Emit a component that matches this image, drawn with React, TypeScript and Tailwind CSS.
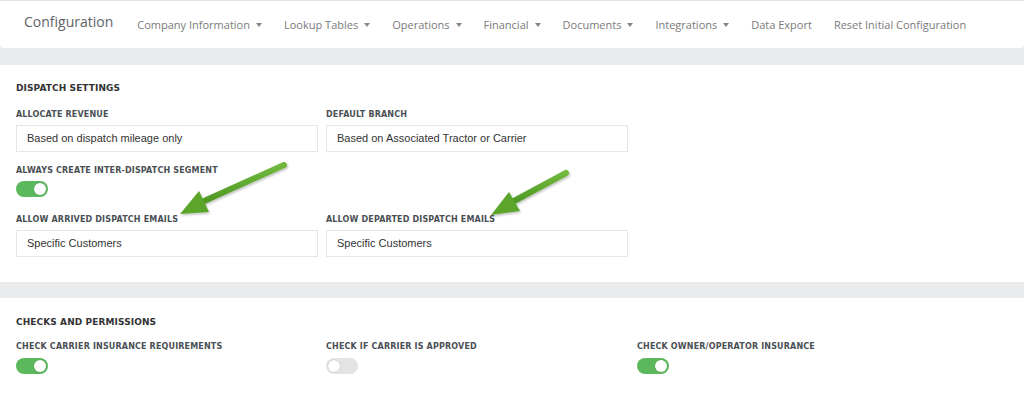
import React from 'react';

const NAV = [
  { label: 'Company Information', caret: true },
  { label: 'Lookup Tables', caret: true },
  { label: 'Operations', caret: true },
  { label: 'Financial', caret: true },
  { label: 'Documents', caret: true },
  { label: 'Integrations', caret: true },
  { label: 'Data Export', caret: false },
  { label: 'Reset Initial Configuration', caret: false },
];

const Label = ({ children }: { children: React.ReactNode }) => (
  <div className="text-[8px] font-bold tracking-[0.02em] text-[#4a4f55] leading-[10px] uppercase font-['DejaVu_Sans',sans-serif]">
    {children}
  </div>
);

const SectionTitle = ({ children }: { children: React.ReactNode }) => (
  <div className="text-[9px] font-bold tracking-[0.01em] text-[#333] leading-[12px] font-['DejaVu_Sans',sans-serif]">
    {children}
  </div>
);

const Field = ({ value }: { value: string }) => (
  <div className="mt-[5px] h-[27px] border border-[#e6e6e6] flex items-center px-[10px] text-[11px] text-[#333] font-['Liberation_Sans',Arial,sans-serif]">
    {value}
  </div>
);

const Toggle = ({ on, className = 'mt-[5px]' }: { on: boolean; className?: string }) => (
  <div
    className={
      className +
      ' w-[32px] h-[16px] rounded-full p-[2px] flex ' +
      (on ? 'bg-[#5cb85c] justify-end' : 'bg-[#e3e3e3] justify-start')
    }
  >
    <div className="w-[12px] h-[12px] rounded-full bg-white shadow-[0_0_1px_rgba(0,0,0,0.3)]" />
  </div>
);

export default function App() {
  return (
    <div className="w-[1024px] h-[396px] bg-[#e9eaeb] overflow-hidden relative">
      {/* top nav */}
      <div className="h-[48px] bg-white border-t border-[#e4e4e4] rounded-b-[4px] flex items-start font-['Open_Sans',sans-serif]">
        <div className="ml-[24px] mt-[11px] text-[14px] text-[#5f6368] leading-[20px]">Configuration</div>
        <div className="ml-[24px] mt-[16px] flex gap-[22px] text-[11px] text-[#7a7a7a] leading-[16px]">
          {NAV.map((n) => (
            <div key={n.label} className="flex items-center">
              {n.label}
              {n.caret && (
                <span className="ml-[6px] w-0 h-0 border-l-[3px] border-r-[3px] border-t-[4px] border-l-transparent border-r-transparent border-t-[#888]" />
              )}
            </div>
          ))}
        </div>
      </div>

      {/* dispatch settings */}
      <div className="mt-[17px] bg-white h-[217px] pl-[16px] pt-[17px]">
        <SectionTitle>DISPATCH SETTINGS</SectionTitle>
        <div className="mt-[16px] grid grid-cols-[302px_302px] gap-x-[8px]">
          <div>
            <Label>Allocate Revenue</Label>
            <Field value="Based on dispatch mileage only" />
          </div>
          <div>
            <Label>Default Branch</Label>
            <Field value="Based on Associated Tractor or Carrier" />
          </div>
        </div>
        <div className="mt-[14px]">
          <Label>Always Create Inter-Dispatch Segment</Label>
          <Toggle on />
        </div>
        <div className="mt-[18px] grid grid-cols-[302px_302px] gap-x-[8px]">
          <div>
            <Label>Allow Arrived Dispatch Emails</Label>
            <Field value="Specific Customers" />
          </div>
          <div>
            <Label>Allow Departed Dispatch Emails</Label>
            <Field value="Specific Customers" />
          </div>
        </div>
      </div>

      {/* checks and permissions */}
      <div className="mt-[16px] bg-white h-[120px] pl-[16px] pt-[18px]">
        <SectionTitle>CHECKS AND PERMISSIONS</SectionTitle>
        <div className="mt-[14px] grid grid-cols-[302px_303px_302px] gap-x-[8px]">
          <div>
            <Label>Check Carrier Insurance Requirements</Label>
            <Toggle on className="mt-[6px]" />
          </div>
          <div>
            <Label>Check If Carrier Is Approved</Label>
            <Toggle on={false} className="mt-[6px]" />
          </div>
          <div>
            <Label>Check Owner/Operator Insurance</Label>
            <Toggle on className="mt-[6px]" />
          </div>
        </div>
      </div>

      {/* annotation arrows */}
      <svg className="absolute left-0 top-0 pointer-events-none" width="1024" height="396" viewBox="0 0 1024 396">
        <defs>
          <linearGradient id="ag" x1="0" y1="0" x2="0" y2="1">
            <stop offset="0" stopColor="#72b83e" />
            <stop offset="1" stopColor="#4f9a25" />
          </linearGradient>
          <filter id="sh" x="-20%" y="-20%" width="140%" height="140%">
            <feDropShadow dx="1" dy="1.5" stdDeviation="1.2" floodColor="#000" floodOpacity="0.25" />
          </filter>
        </defs>
        <g filter="url(#sh)">
          <line x1="284" y1="165" x2="204" y2="201" stroke="url(#ag)" strokeWidth="6" strokeLinecap="round" />
          <polygon points="180,214 199,191 209,212" fill="#5aa52c" />
          <line x1="566" y1="173" x2="514" y2="201" stroke="url(#ag)" strokeWidth="6" strokeLinecap="round" />
          <polygon points="491,215 509,192 520,211" fill="#5aa52c" />
        </g>
      </svg>
    </div>
  );
}
